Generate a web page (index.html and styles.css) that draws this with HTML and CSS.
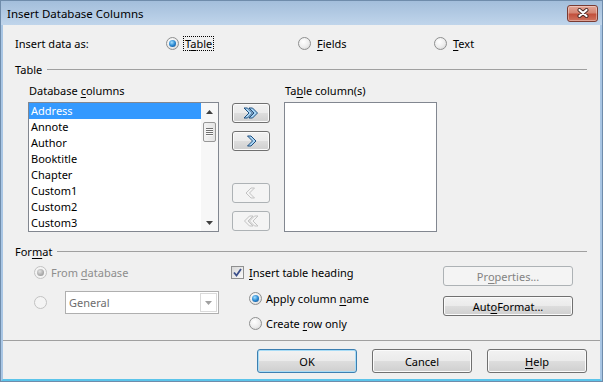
FILE: index.html
```html
<!DOCTYPE html>
<html lang="en">
<head>
    <meta charset="UTF-8">
    <meta name="viewport" content="width=device-width, initial-scale=1.0">
    <title>Insert Database Columns</title>
    <link rel="stylesheet" href="styles.css">
</head>
<body>
    <div class="window">
        <div class="titlebar">
            <span class="title">Insert Database Columns</span>
            <div class="close-btn">
                <svg width="14" height="10" viewBox="0 0 14 10">
                    <path d="M3.5 2 L10.5 8 M10.5 2 L3.5 8" stroke="#4a2a26" stroke-width="4" stroke-linecap="round"/>
                    <path d="M3.5 2 L10.5 8 M10.5 2 L3.5 8" stroke="#fff" stroke-width="2.2" stroke-linecap="round"/>
                </svg>
            </div>
        </div>

        <div class="client">
            <div class="body">
                <!-- Insert data as -->
                <div class="insert-row">
                    <span class="insert-label">Insert data as:</span>
                    <div class="opt opt-table"><span class="radio on"></span><span class="focus">T<u>a</u>ble</span></div>
                    <div class="opt opt-fields"><span class="radio"></span><span><u>F</u>ields</span></div>
                    <div class="opt"><span class="radio"></span><span><u>T</u>ext</span></div>
                </div>

                <div class="group-head"><span>Table</span><span class="rule"></span></div>

                <div class="columns">
                    <div class="col-label">Database <u>c</u>olumns</div>
                    <div></div>
                    <div class="col-label right-col">Ta<u>b</u>le column(s)</div>

                    <div class="listbox">
                        <div class="items">
                            <div class="item sel">Address</div>
                            <div class="item">Annote</div>
                            <div class="item">Author</div>
                            <div class="item">Booktitle</div>
                            <div class="item">Chapter</div>
                            <div class="item">Custom1</div>
                            <div class="item">Custom2</div>
                            <div class="item">Custom3</div>
                        </div>
                        <div class="scrollbar">
                            <div class="sb-btn">
                                <svg width="7" height="4" viewBox="0 0 7 4"><path d="M0 4 L3.5 0 L7 4Z" fill="#404040"/></svg>
                            </div>
                            <div class="sb-thumb"><span class="grip"></span></div>
                            <div class="sb-track"></div>
                            <div class="sb-btn">
                                <svg width="7" height="4" viewBox="0 0 7 4"><path d="M0 0 L3.5 4 L7 0Z" fill="#404040"/></svg>
                            </div>
                        </div>
                    </div>

                    <div class="movers">
                        <button class="btn mv">
                            <svg width="18" height="12" viewBox="0 0 18 12">
                                <path d="M2 1 L5.5 1 L10.5 6 L5.5 11 L2 11 L7 6Z" fill="#a8d4f4" stroke="#1f4f7f"/>
                                <path d="M7 1 L10.5 1 L15.5 6 L10.5 11 L7 11 L12 6Z" fill="#a8d4f4" stroke="#1f4f7f"/>
                            </svg>
                        </button>
                        <button class="btn mv mv-gap">
                            <svg width="12" height="12" viewBox="0 0 12 12">
                                <path d="M2.5 1 L6 1 L11 6 L6 11 L2.5 11 L7.5 6Z" fill="#a8d4f4" stroke="#1f4f7f"/>
                            </svg>
                        </button>
                        <button class="btn mv off mv-far">
                            <svg width="12" height="12" viewBox="0 0 12 12">
                                <path d="M9.5 1 L6 1 L1 6 L6 11 L9.5 11 L4.5 6Z" fill="#f4f4f4" stroke="#c3c3c3"/>
                            </svg>
                        </button>
                        <button class="btn mv off mv-gap">
                            <svg width="18" height="12" viewBox="0 0 18 12">
                                <path d="M16 1 L12.5 1 L7.5 6 L12.5 11 L16 11 L11 6Z" fill="#f4f4f4" stroke="#c3c3c3"/>
                                <path d="M11 1 L7.5 1 L2.5 6 L7.5 11 L11 11 L6 6Z" fill="#f4f4f4" stroke="#c3c3c3"/>
                            </svg>
                        </button>
                    </div>

                    <div class="listbox right-col"></div>
                </div>

                <div class="group-head format-head"><span>For<u>m</u>at</span><span class="rule"></span></div>

                <div class="format">
                    <div class="fmt-left">
                        <div class="fmt-row disabled"><span class="radio off on"></span><span>From <u>d</u>atabase</span></div>
                        <div class="combo-row">
                            <span class="radio off"></span>
                            <div class="combo">
                                <span class="combo-text">General</span>
                                <span class="combo-arrow">
                                    <svg width="7" height="4" viewBox="0 0 7 4"><path d="M0 0 L3.5 4 L7 0Z" fill="#a0a0a0"/></svg>
                                </span>
                            </div>
                        </div>
                    </div>

                    <div class="fmt-mid">
                        <div class="check-row">
                            <span class="check">
                                <svg width="11" height="11" viewBox="0 0 11 11"><path d="M2 5.5 L4.5 8.5 L9 2" fill="none" stroke="#3b4f8a" stroke-width="1.8"/></svg>
                            </span>
                            <span><u>I</u>nsert table heading</span>
                        </div>
                        <div class="sub-row"><span class="radio on"></span><span>Apply column <u>n</u>ame</span></div>
                        <div class="sub-row last"><span class="radio"></span><span>Create <u>r</u>ow only</span></div>
                    </div>

                    <div class="fmt-right">
                        <button class="btn side off">Pr<u>o</u>perties...</button>
                        <button class="btn side side-gap">Aut<u>o</u>Format...</button>
                    </div>
                </div>
            </div>

            <div class="footer">
                <button class="btn foot default">OK</button>
                <button class="btn foot">Cancel</button>
                <button class="btn foot"><u>H</u>elp</button>
            </div>
        </div>
    </div>
</body>
</html>
```

FILE: styles.css
```css
body {
    margin: 0;
    font-family: "Noto Sans", "Open Sans", sans-serif;
    font-size: 11px;
    color: #000;
    background: #f0f0f0;
}
u {
    text-decoration-thickness: 1px;
    text-underline-offset: 2px;
}
.window {
    width: 603px;
    height: 382px;
    box-sizing: border-box;
    border: 1px solid #6f8cab;
    display: flex;
    flex-direction: column;
    background: #f0f0f0;
}
.titlebar {
    height: 24px;
    flex: none;
    display: flex;
    align-items: center;
    padding-left: 6px;
    background: linear-gradient(#a3bedb, #c0d5eb);
}
.title {
    font-size: 11.5px;
}
.close-btn {
    margin-left: auto;
    margin-right: 4px;
    width: 31px;
    height: 17px;
    box-sizing: border-box;
    border: 1px solid #7a3b32;
    border-radius: 3px;
    background: linear-gradient(#e3a596 0%, #d48573 45%, #c2503c 55%, #cf735f 100%);
    box-shadow: inset 0 0 0 1px rgba(255, 255, 255, 0.35);
    display: flex;
    align-items: center;
    justify-content: center;
}
.client {
    flex: 1;
    display: flex;
    flex-direction: column;
    border: 2px solid #a9c6e4;
    border-top: none;
    border-bottom-color: #5bc4ea;
}
.body {
    flex: 1;
    padding: 9px 13px 0 12px;
}

/* radios / checkbox */
.radio {
    position: relative;
    flex: none;
    width: 13px;
    height: 13px;
    box-sizing: border-box;
    border-radius: 50%;
    border: 1px solid #8e8f8f;
    background: radial-gradient(circle at 40% 35%, #ffffff, #ececec 55%, #cdcdcd);
}
.radio.on::after {
    content: '';
    position: absolute;
    left: 2px;
    top: 2px;
    width: 7px;
    height: 7px;
    border-radius: 50%;
    background: radial-gradient(circle at 40% 35%, #a6e0ff, #2b8ad3 50%, #0c3f7c);
}
.radio.off {
    border-color: #c2c2c2;
    background: #f4f4f4;
}
.radio.off.on::after {
    background: radial-gradient(circle at 40% 35%, #e2e2e2, #aaaaaa 60%, #8e8e8e);
}
.check {
    flex: none;
    width: 13px;
    height: 13px;
    box-sizing: border-box;
    border: 1px solid #8e8f8f;
    background: linear-gradient(135deg, #d8d8d8, #fafafa);
    display: flex;
    align-items: center;
    justify-content: center;
}

/* insert row */
.insert-row {
    display: flex;
    align-items: center;
    height: 18px;
}
.insert-label {
    width: 151px;
}
.opt {
    display: flex;
    align-items: center;
    gap: 6px;
}
.opt-table {
    width: 132px;
}
.opt-fields {
    width: 136px;
}
.focus {
    border: 1px dotted #000;
    padding: 0 1px;
    margin-left: -2px;
    line-height: 13px;
}

/* group headings */
.group-head {
    display: flex;
    align-items: center;
    height: 14px;
    margin-top: 10px;
}
.group-head .rule {
    flex: 1;
    height: 1px;
    background: #a0a0a0;
    margin-left: 5px;
}
.format-head {
    margin-top: 12px;
}

/* columns */
.columns {
    display: grid;
    grid-template-columns: 191px 38px 154px;
    column-gap: 13px;
    row-gap: 4px;
    margin: 8px 0 0 13px;
}
.col-label {
    height: 14px;
    line-height: 14px;
    padding-left: 1px;
}
.right-col {
    margin-left: 1px;
}
.listbox {
    height: 130px;
    box-sizing: border-box;
    border: 1px solid #828790;
    background: #fff;
    display: flex;
}
.items {
    flex: 1;
}
.item {
    height: 16px;
    line-height: 16px;
    padding-left: 2px;
}
.item.sel {
    background: #3399ff;
    color: #fff;
}
.scrollbar {
    width: 17px;
    display: flex;
    flex-direction: column;
    background: #f7f7f7;
}
.sb-btn {
    height: 17px;
    display: flex;
    align-items: center;
    justify-content: center;
}
.sb-thumb {
    height: 20px;
    margin: 2px 2px 0;
    box-sizing: border-box;
    border: 1px solid #979797;
    border-radius: 2px;
    background: linear-gradient(90deg, #f3f3f3, #e4e4e4);
    display: flex;
    align-items: center;
    justify-content: center;
}
.grip {
    width: 7px;
    height: 8px;
    background: repeating-linear-gradient(#707070 0 1px, #fafafa 1px 2px);
}
.sb-track {
    flex: 1;
}

/* buttons */
.btn {
    box-sizing: border-box;
    margin: 0;
    padding: 0;
    font-family: inherit;
    font-size: 11px;
    color: #000;
    border: 1px solid #707070;
    border-radius: 3px;
    background: linear-gradient(#f2f2f2 0%, #ebebeb 48%, #dddddd 52%, #cfcfcf 100%);
    box-shadow: inset 0 0 0 1px #fbfbfb;
    display: flex;
    align-items: center;
    justify-content: center;
}
.btn.off {
    border-color: #adb2b5;
    background: #f4f4f4;
    color: #838383;
    box-shadow: none;
}
.btn.default {
    border-color: #3c7fb1;
    box-shadow: inset 0 0 0 1px #a8dcf6;
}
.movers {
    display: flex;
    flex-direction: column;
    padding-top: 1px;
}
.mv {
    width: 38px;
    height: 20px;
}
.mv-gap {
    margin-top: 8px;
}
.mv-far {
    margin-top: 32px;
}

/* format */
.format {
    display: flex;
    margin-top: 6px;
    padding-left: 19px;
}
.fmt-left {
    width: 185px;
}
.fmt-row {
    display: flex;
    align-items: center;
    gap: 4px;
    height: 16px;
}
.disabled {
    color: #8d8d8d;
}
.combo-row {
    display: flex;
    align-items: center;
    margin-top: 11px;
}
.combo {
    margin-left: 18px;
    width: 154px;
    height: 23px;
    box-sizing: border-box;
    border: 1px solid #afafaf;
    background: #fff;
    display: flex;
    align-items: center;
}
.combo-text {
    padding-left: 3px;
    color: #6d6d6d;
}
.combo-arrow {
    margin-left: auto;
    margin-right: 1px;
    width: 17px;
    height: 19px;
    box-sizing: border-box;
    border: 1px solid #dadada;
    display: flex;
    align-items: center;
    justify-content: center;
}
.fmt-mid {
    width: 212px;
    margin-left: 12px;
}
.check-row {
    display: flex;
    align-items: center;
    gap: 5px;
    height: 14px;
    margin-top: 1px;
}
.sub-row {
    display: flex;
    align-items: center;
    gap: 4px;
    height: 14px;
    margin-top: 12px;
    padding-left: 18px;
}
.sub-row.last {
    margin-top: 11px;
}
.fmt-right {
    width: 130px;
    padding-top: 2px;
}
.side {
    width: 130px;
    height: 20px;
}
.side-gap {
    margin-top: 10px;
}

/* footer */
.footer {
    flex: none;
    display: flex;
    justify-content: flex-end;
    gap: 15px;
    border-top: 1px solid #a0a0a0;
    padding: 8px 13px 6px 0;
}
.foot {
    width: 100px;
    height: 24px;
}
```
